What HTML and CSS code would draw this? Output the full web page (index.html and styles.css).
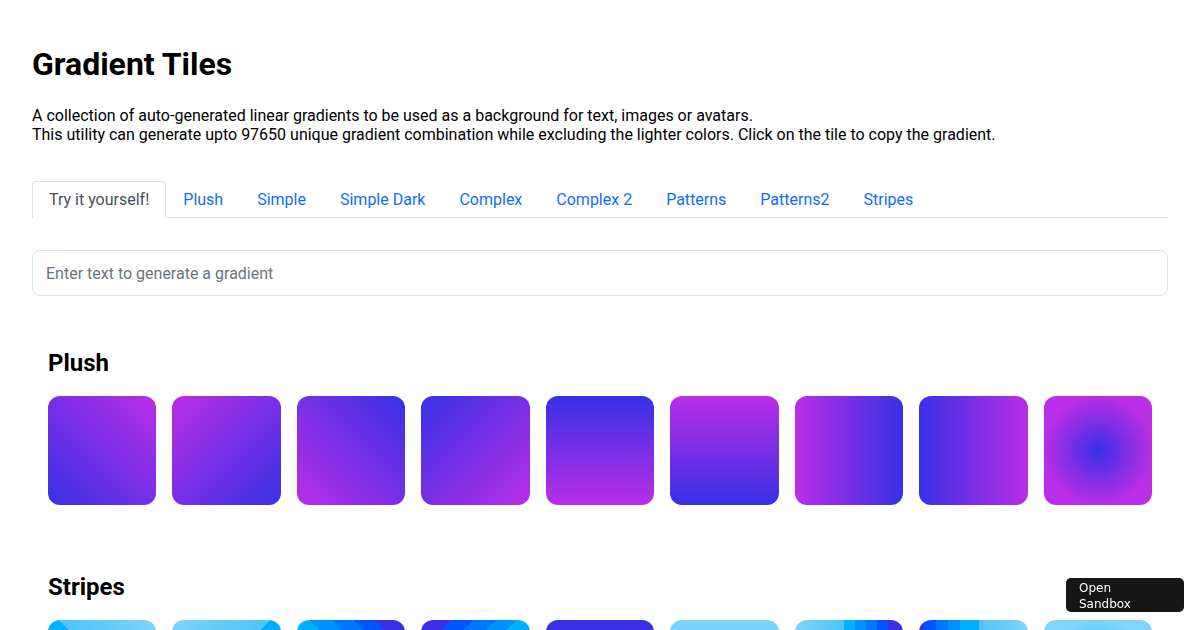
FILE: index.html
```html
<!DOCTYPE html>
<html lang="en">
<head>
<meta charset="utf-8">
<title>Gradient Tiles</title>
<link rel="stylesheet" href="styles.css">
</head>
<body>
<div class="page">
  <h1 class="title">Gradient Tiles</h1>
  <p class="intro">A collection of auto-generated linear gradients to be used as a background for text, images or avatars.<br>This utility can generate upto 97650 unique gradient combination while excluding the lighter colors. Click on the tile to copy the gradient.</p>
  <ul class="tabs">
    <li><a class="tab active" href="#">Try it yourself!</a></li>
    <li><a class="tab" href="#">Plush</a></li>
    <li><a class="tab" href="#">Simple</a></li>
    <li><a class="tab" href="#">Simple Dark</a></li>
    <li><a class="tab" href="#">Complex</a></li>
    <li><a class="tab" href="#">Complex 2</a></li>
    <li><a class="tab" href="#">Patterns</a></li>
    <li><a class="tab" href="#">Patterns2</a></li>
    <li><a class="tab" href="#">Stripes</a></li>
  </ul>
  <input class="gen-input" type="text" placeholder="Enter text to generate a gradient">

  <section class="group">
    <h2 class="group-title">Plush</h2>
    <div class="tiles">
      <div class="tile p1"></div>
      <div class="tile p2"></div>
      <div class="tile p3"></div>
      <div class="tile p4"></div>
      <div class="tile p5"></div>
      <div class="tile p6"></div>
      <div class="tile p7"></div>
      <div class="tile p8"></div>
      <div class="tile p9"></div>
    </div>
  </section>

  <section class="group">
    <h2 class="group-title">Stripes</h2>
    <div class="tiles">
      <div class="tile s1"></div>
      <div class="tile s2"></div>
      <div class="tile s3"></div>
      <div class="tile s4"></div>
      <div class="tile s5"></div>
      <div class="tile s6"></div>
      <div class="tile s7"></div>
      <div class="tile s8"></div>
      <div class="tile s9"></div>
    </div>
  </section>
</div>
<a class="sandbox" href="#">Open<br>Sandbox</a>
</body>
</html>
```

FILE: styles.css
```css
html, body {
  margin: 0;
  padding: 0;
  background: #fff;
}

body {
  font-family: Roboto, "Liberation Sans", Arial, sans-serif;
  color: #000;
  font-size: 16px;
}

.page {
  padding: 0 32px 40px;
}

.title {
  margin: 45px 0 22.5px;
  font-size: 32px;
  line-height: 1.2;
  font-weight: 700;
}

.intro {
  margin: 0 0 37.5px;
  font-size: 16px;
  line-height: normal;
}

.tabs {
  display: flex;
  list-style: none;
  margin: 0;
  padding: 0;
  border-bottom: 1px solid #dee2e6;
}

.tab {
  display: block;
  padding: 8px 16px;
  line-height: normal;
  border: 1px solid transparent;
  border-top-left-radius: 4px;
  border-top-right-radius: 4px;
  margin-bottom: -1px;
  color: #0d6efd;
  text-decoration: none;
}

.tab.active {
  color: #495057;
  background: #fff;
  border-color: #dee2e6 #dee2e6 #fff;
}

.gen-input {
  display: block;
  box-sizing: border-box;
  width: 100%;
  height: 46px;
  margin-top: 32px;
  padding: 0 13px;
  border: 1px solid #dee2e6;
  border-radius: 8px;
  font-family: Roboto, "Liberation Sans", Arial, sans-serif;
  font-size: 16px;
  color: #212529;
  outline: none;
}

.gen-input::placeholder {
  color: #6c757d;
}

.group {
  margin-top: 33.5px;
  padding: 19px 16px 16px;
}

.group-title {
  margin: 0 0 18.5px;
  font-size: 24px;
  line-height: 1.2;
  font-weight: 700;
}

.tiles {
  display: grid;
  grid-template-columns: repeat(9, 1fr);
  gap: 16px;
}

.tile {
  aspect-ratio: 1 / 1;
  border-radius: 12px;
}

/* Plush */
.p1 { background: linear-gradient(to top right, #3730e6, #b92ee6); }
.p2 { background: linear-gradient(to top left, #3730e6, #b92ee6); }
.p3 { background: linear-gradient(to bottom left, #3730e6, #b92ee6); }
.p4 { background: linear-gradient(to bottom right, #3730e6, #b92ee6); }
.p5 { background: linear-gradient(to bottom, #3730e6, #b92ee6); }
.p6 { background: linear-gradient(to top, #3730e6, #b92ee6); }
.p7 { background: linear-gradient(to left, #3730e6, #b92ee6); }
.p8 { background: linear-gradient(to right, #3730e6, #b92ee6); }
.p9 { background: radial-gradient(circle closest-side, #3730e6, #b92ee6); }

/* Stripes */
.s1 { background: linear-gradient(to top right, #3a2fe6 0 14%, #0055ff 14% 24%, #0077ff 24% 34%, #0091ff 34% 44%, #00b0ff 44% 55%, #4fc3f7 55%, #81d4fa 100%); }
.s2 { background: linear-gradient(to top left, #3a2fe6 0 14%, #0055ff 14% 24%, #0077ff 24% 34%, #0091ff 34% 44%, #00b0ff 44% 55%, #4fc3f7 55%, #81d4fa 100%); }
.s3 { background: linear-gradient(to bottom left, #3a2fe6 0 14%, #0055ff 14% 24%, #0077ff 24% 34%, #0091ff 34% 44%, #00b0ff 44% 55%, #4fc3f7 55%, #81d4fa 100%); }
.s4 { background: linear-gradient(to bottom right, #3a2fe6 0 14%, #0055ff 14% 24%, #0077ff 24% 34%, #0091ff 34% 44%, #00b0ff 44% 55%, #4fc3f7 55%, #81d4fa 100%); }
.s5 { background: linear-gradient(to bottom, #3a2fe6 0 14%, #0055ff 14% 24%, #0077ff 24% 34%, #0091ff 34% 44%, #00b0ff 44% 55%, #4fc3f7 55%, #81d4fa 100%); }
.s6 { background: linear-gradient(to top, #3a2fe6 0 14%, #0055ff 14% 24%, #0077ff 24% 34%, #0091ff 34% 44%, #00b0ff 44% 55%, #4fc3f7 55%, #81d4fa 100%); }
.s7 { background: linear-gradient(to left, #3a2fe6 0 14%, #0055ff 14% 24%, #0077ff 24% 34%, #0091ff 34% 44%, #00b0ff 44% 55%, #4fc3f7 55%, #81d4fa 100%); }
.s8 { background: linear-gradient(to right, #3a2fe6 0 5%, #0055ff 5% 16%, #0077ff 16% 27%, #0091ff 27% 38%, #00b0ff 38% 55%, #4fc3f7 55%, #81d4fa 100%); }
.s9 { background: radial-gradient(circle closest-side, #3a2fe6 0 14%, #0055ff 14% 24%, #0077ff 24% 34%, #0091ff 34% 44%, #00b0ff 44% 55%, #4fc3f7 55%, #81d4fa 100%); }

.sandbox {
  position: fixed;
  right: 16px;
  bottom: 18px;
  box-sizing: border-box;
  width: 118px;
  height: 34px;
  padding: 2px 13px;
  background: #161616;
  border-radius: 5px;
  color: #fff;
  font-family: "DejaVu Sans", sans-serif;
  font-size: 12px;
  line-height: 16px;
  text-decoration: none;
}
```
